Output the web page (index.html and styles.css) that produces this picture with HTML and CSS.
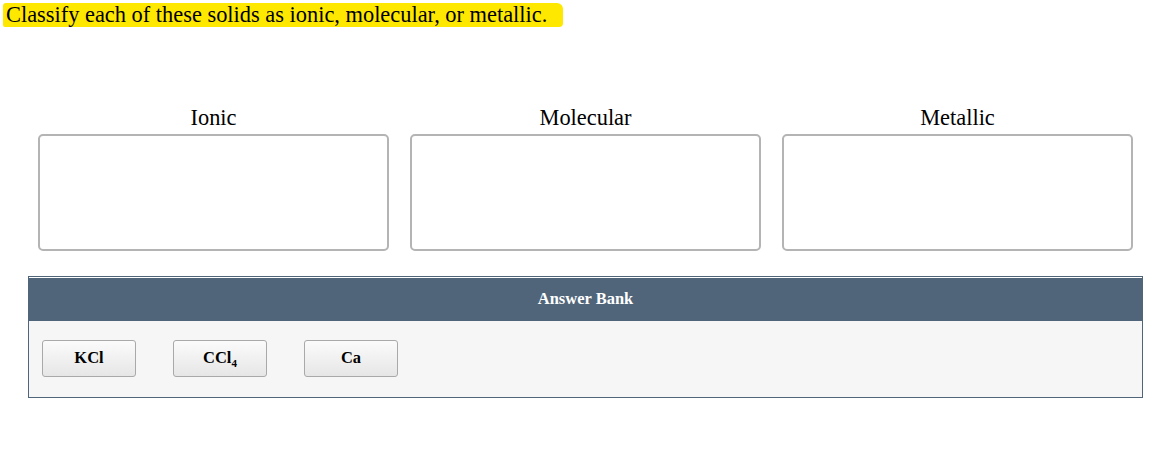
FILE: index.html
```html
<!DOCTYPE html>
<html>
<head>
<meta charset="utf-8">
<link rel="stylesheet" href="styles.css">
</head>
<body>
<div class="prompt"><span class="hl">Classify each of these solids as ionic, molecular, or metallic.</span></div>
<div class="bins">
  <div class="bin"><div class="bin-label">Ionic</div><div class="bin-box"></div></div>
  <div class="bin"><div class="bin-label">Molecular</div><div class="bin-box"></div></div>
  <div class="bin"><div class="bin-label">Metallic</div><div class="bin-box"></div></div>
</div>
<div class="bank">
  <div class="bank-head">Answer Bank</div>
  <div class="bank-body">
    <div class="chip">KCl</div>
    <div class="chip">CCl<sub>4</sub></div>
    <div class="chip">Ca</div>
  </div>
</div>
</body>
</html>
```
FILE: styles.css
```css
html, body {
  margin: 0;
  padding: 0;
  background: #fff;
  font-family: "Liberation Serif", "Times New Roman", serif;
  color: #000;
}
.prompt {
  padding: 3px 0 0 3px;
  height: 28px;
  box-sizing: border-box;
  font-size: 22.4px;
  line-height: 24px;
}
.hl {
  display: inline-block;
  background: #ffe800;
  padding: 0 16px 0 3px;
  border-radius: 3px 6px 4px 2px;
}
.bins {
  display: flex;
  gap: 21px;
  margin: 76px 0 0 38px;
  width: 1095px;
}
.bin {
  flex: 1;
  display: flex;
  flex-direction: column;
}
.bin-label {
  text-align: center;
  font-size: 22.4px;
  line-height: 27px;
  height: 30px;
}
.bin-box {
  height: 113px;
  border: 2px solid #b4b4b4;
  border-radius: 5px;
}
.bank {
  margin: 25px 0 0 28px;
  width: 1113px;
  border: 1px solid #50657a;
}
.bank-head {
  margin-top: 1px;
  background: #506579;
  color: #fff;
  font-weight: bold;
  font-size: 16.5px;
  text-align: center;
  height: 43px;
  line-height: 41px;
}
.bank-body {
  background: #f6f6f6;
  height: 76px;
  display: flex;
  gap: 37px;
  padding: 19px 0 0 13px;
  box-sizing: border-box;
  align-items: flex-start;
}
.chip {
  width: 92px;
  height: 35px;
  border: 1px solid #a9a9a9;
  border-radius: 3px;
  background: linear-gradient(#fbfbfb, #e6e6e6);
  font-weight: bold;
  font-size: 16.5px;
  line-height: 33px;
  text-align: center;
}
.chip sub {
  font-size: 11px;
  line-height: 0;
  vertical-align: -4px;
}
```
